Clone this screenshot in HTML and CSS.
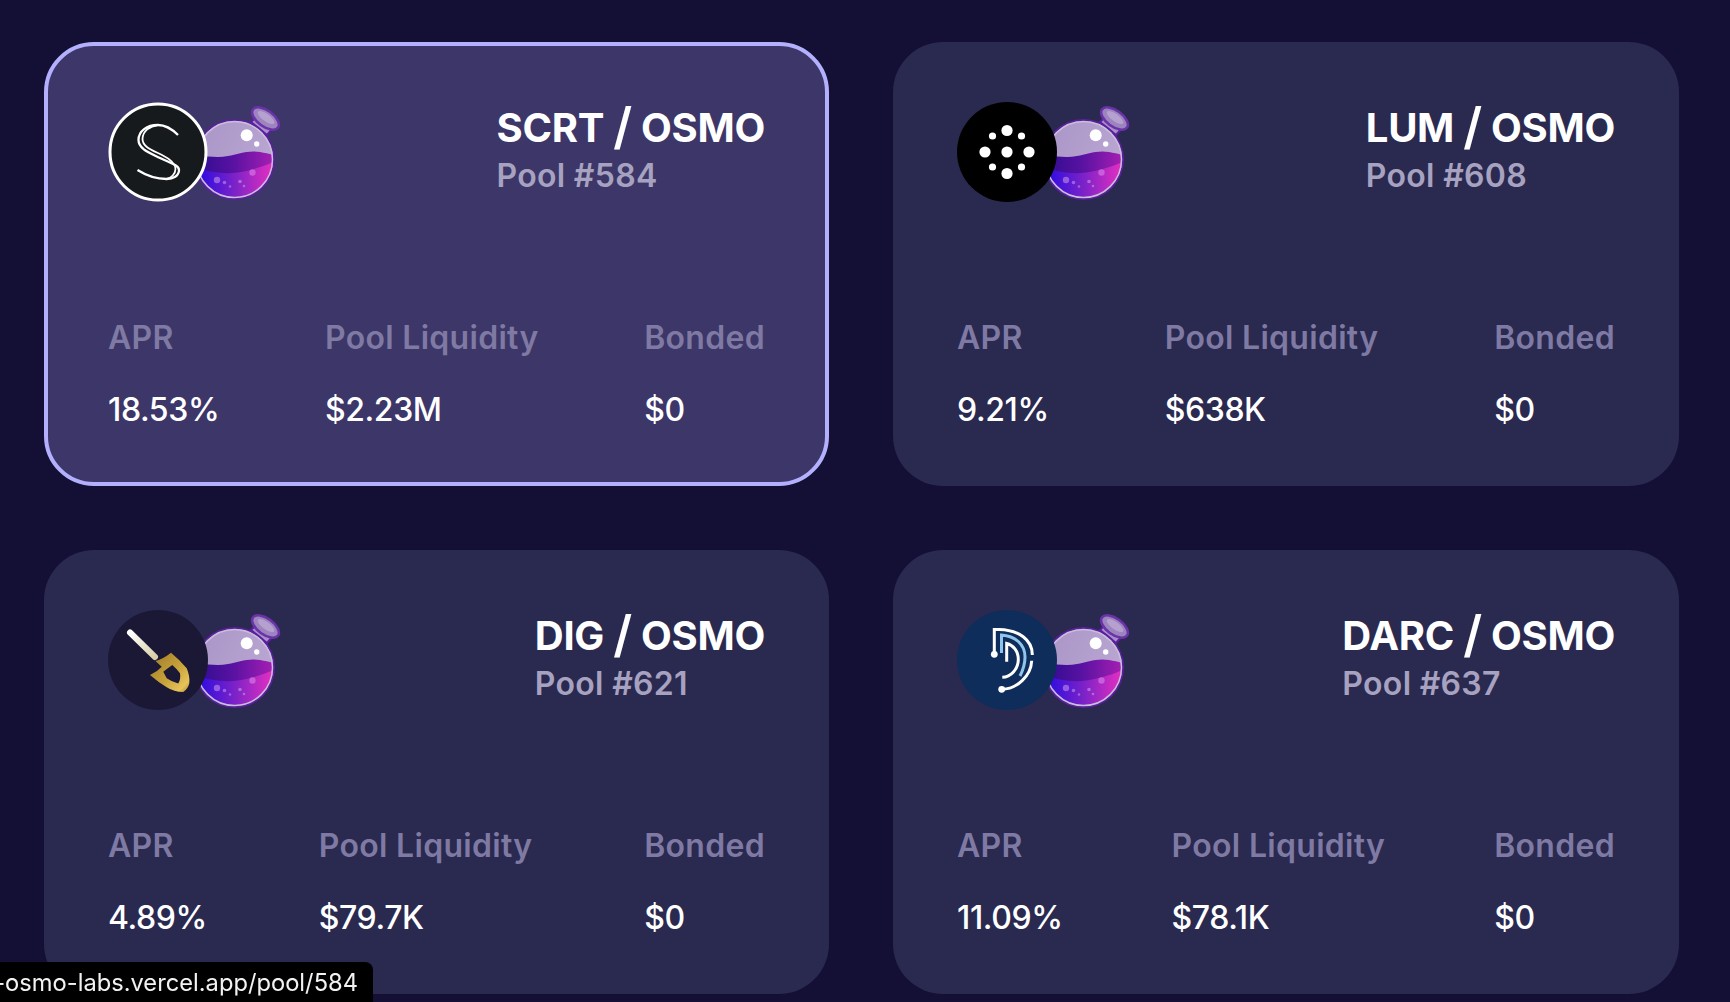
FILE: index.html
```html
<!DOCTYPE html>
<html lang="en">
<head>
<meta charset="utf-8">
<title>Pools</title>
<link rel="stylesheet" href="styles.css">
</head>
<body>
<svg class="defs" width="0" height="0" aria-hidden="true">
  <defs>
    <linearGradient id="glass" x1="0" y1="0" x2="1" y2="0.4"><stop offset="0" stop-color="#a994c6"/><stop offset="1" stop-color="#b9a6d2"/></linearGradient>
    <linearGradient id="band" x1="0" y1="0" x2="1" y2="0"><stop offset="0" stop-color="#2a0b8f"/><stop offset="0.5" stop-color="#5a12a2"/><stop offset="1" stop-color="#ab20b4"/></linearGradient>
    <linearGradient id="liquid" x1="0" y1="0" x2="1" y2="0"><stop offset="0" stop-color="#1f08e6"/><stop offset="0.5" stop-color="#7a22c8"/><stop offset="1" stop-color="#ee30c0"/></linearGradient>
    <linearGradient id="gold" x1="0" y1="0" x2="1" y2="1"><stop offset="0" stop-color="#9a7a2a"/><stop offset="0.55" stop-color="#c8a23a"/><stop offset="0.85" stop-color="#e6c45a"/><stop offset="1" stop-color="#a88428"/></linearGradient>
    <linearGradient id="handle" x1="0" y1="0" x2="1" y2="1"><stop offset="0" stop-color="#ffffff"/><stop offset="1" stop-color="#d8cfa8"/></linearGradient>
    <clipPath id="bulb"><circle cx="38.5" cy="53.5" r="38.5"/></clipPath>
    <filter id="glow" x="-50%" y="-50%" width="200%" height="200%"><feGaussianBlur stdDeviation="0.7"/></filter>
    <symbol id="flask" viewBox="-4 0 92 96">
      <path d="M55 16 L63 8 L78 21 L71 29 Z" fill="#a78fc9" stroke="#5b1fa0" stroke-width="2"/>
      <ellipse cx="69.5" cy="12.5" rx="15.5" ry="8" transform="rotate(36 69.5 12.5)" fill="#9c84bf" stroke="#6a33a8" stroke-width="2.6"/>
      <ellipse cx="70" cy="11.5" rx="10" ry="3.6" transform="rotate(36 70 11.5)" fill="#b5a0d0"/>
      <circle cx="38.5" cy="53.5" r="40.5" fill="#5b1fa0"/>
      <g clip-path="url(#bulb)">
        <rect x="-4" y="10" width="84" height="86" fill="url(#glass)"/>
        <path d="M-4 50 C12 50 22 52 32 50 C42 48 52 44 64 46 C70 47 74 48 80 50 L80 96 L-4 96 Z" fill="url(#band)"/>
        <path d="M-4 61 C10 65 24 68 36 67 C50 66 64 62 80 55 L80 96 L-4 96 Z" fill="url(#liquid)"/>
        <circle cx="21" cy="74" r="3.2" fill="#a878e6" opacity=".75"/>
        <circle cx="28.5" cy="76.5" r="1.8" fill="#a878e6" opacity=".75"/>
        <circle cx="34" cy="80.5" r="1.3" fill="#a878e6" opacity=".75"/>
        <circle cx="44" cy="75.5" r="1.8" fill="#b880e6" opacity=".75"/>
        <circle cx="48" cy="80" r="1.3" fill="#b880e6" opacity=".75"/>
        <circle cx="56.5" cy="66.5" r="3.2" fill="#d070e0" opacity=".75"/>
      </g>
      <circle cx="38.5" cy="53.5" r="38" fill="none" stroke="#c8bfd8" stroke-width="1.5"/>
      <circle cx="50.7" cy="29.3" r="6" fill="#fff"/>
      <circle cx="60.7" cy="38" r="2.7" fill="#fff"/>
    </symbol>
  </defs>
</svg>

<main class="grid">
  <a class="card card-active">
    <div class="head">
      <div class="icons">
        <svg class="token" viewBox="0 0 100 100">
          <circle cx="50" cy="50" r="48" fill="#171a1d" stroke="#fff" stroke-width="3"/>
          <path d="M70 33 C64 27 57 23 50 23 C39 23 30.5 29 30.5 38 C30.5 47 42 51 52 56 C62 61 71 63 71 68 C71 74 65 77 58.7 77 C49 77 39 74 29.5 68" fill="none" stroke="#fff" stroke-width="2.3"/>
          <path d="M50 23 C42 24 34.5 29 34.5 37 C34.5 45 44 48 54 53 C62 57 67.5 61 67.5 67 C67.5 72 63 76 58.7 77" fill="none" stroke="#fff" stroke-width="1.8"/>
        </svg>
        <svg class="flask"><use href="#flask"/></svg>
      </div>
      <div class="title">
        <h2>SCRT <span class="slash">/</span> OSMO</h2>
        <p>Pool #584</p>
      </div>
    </div>
    <div class="stats">
      <div class="stat"><span class="label">APR</span><span class="value">18.53%</span></div>
      <div class="stat"><span class="label">Pool Liquidity</span><span class="value">$2.23M</span></div>
      <div class="stat"><span class="label">Bonded</span><span class="value">$0</span></div>
    </div>
  </a>

  <a class="card">
    <div class="head">
      <div class="icons">
        <svg class="token" viewBox="0 0 100 100">
          <circle cx="50" cy="50" r="50" fill="#000"/>
          <g fill="#fff" filter="url(#glow)">
            <circle cx="50" cy="50" r="5.6"/><circle cx="50" cy="28.5" r="5.6"/><circle cx="50" cy="71.5" r="5.6"/>
            <circle cx="28" cy="50" r="5.6"/><circle cx="72" cy="50" r="5.6"/>
            <circle cx="35.5" cy="34" r="3.6"/><circle cx="64.5" cy="34" r="3.6"/><circle cx="35.5" cy="65" r="3.6"/><circle cx="64.5" cy="65" r="3.6"/>
          </g>
        </svg>
        <svg class="flask"><use href="#flask"/></svg>
      </div>
      <div class="title">
        <h2>LUM <span class="slash">/</span> OSMO</h2>
        <p>Pool #608</p>
      </div>
    </div>
    <div class="stats">
      <div class="stat"><span class="label">APR</span><span class="value">9.21%</span></div>
      <div class="stat"><span class="label">Pool Liquidity</span><span class="value">$638K</span></div>
      <div class="stat"><span class="label">Bonded</span><span class="value">$0</span></div>
    </div>
  </a>

  <a class="card">
    <div class="head">
      <div class="icons">
        <svg class="token" viewBox="0 0 100 100">
          <circle cx="50" cy="50" r="50" fill="#1b1836"/>
          <path d="M22 22.5 L47 47" stroke="url(#handle)" stroke-width="6" stroke-linecap="round"/>
          <path fill-rule="evenodd" fill="url(#gold)" d="M47.5 51 Q55 49 63 42.7 Q72 50 78.7 58.3 Q82 66 81.3 73.3 Q80 79 75.3 82 Q66 82 58.7 77.3 Q50 72 42 65 Q49 62 53.7 56.7 Z M55.3 61.7 Q60 58 64.3 55 Q69 59 72 63.3 Q73 69 70.3 73.5 Q64 72 58.7 68.3 Z"/>
        </svg>
        <svg class="flask"><use href="#flask"/></svg>
      </div>
      <div class="title">
        <h2>DIG <span class="slash">/</span> OSMO</h2>
        <p>Pool #621</p>
      </div>
    </div>
    <div class="stats">
      <div class="stat"><span class="label">APR</span><span class="value">4.89%</span></div>
      <div class="stat"><span class="label">Pool Liquidity</span><span class="value">$79.7K</span></div>
      <div class="stat"><span class="label">Bonded</span><span class="value">$0</span></div>
    </div>
  </a>

  <a class="card">
    <div class="head">
      <div class="icons">
        <svg class="token" viewBox="0 0 100 100">
          <circle cx="50" cy="50" r="50" fill="#0f2d5a"/>
          <g fill="none" stroke-width="3">
            <path d="M37.3 44 L37.3 19.5 L42 19.5 C62 20 75.5 30 75.3 45" stroke="#fff"/>
            <path d="M74.7 50.7 C74 66 60 79 44.7 79.3" stroke="#fff"/>
            <path d="M44.5 43 L44.5 25 C58 26 68 34 68 47 C68 54 66 60 63 66" stroke="#8fc4ec"/>
            <path d="M49.7 51.7 L49.7 33.5 C56 35 61.5 41 61.3 50 C61 59 54 67 45.3 67.3" stroke="#fff"/>
          </g>
          <circle cx="37.3" cy="44.3" r="3.4" fill="#fff"/>
          <circle cx="44.7" cy="79.3" r="3.4" fill="#fff"/>
        </svg>
        <svg class="flask"><use href="#flask"/></svg>
      </div>
      <div class="title">
        <h2>DARC <span class="slash">/</span> OSMO</h2>
        <p>Pool #637</p>
      </div>
    </div>
    <div class="stats">
      <div class="stat"><span class="label">APR</span><span class="value">11.09%</span></div>
      <div class="stat"><span class="label">Pool Liquidity</span><span class="value">$78.1K</span></div>
      <div class="stat"><span class="label">Bonded</span><span class="value">$0</span></div>
    </div>
  </a>
</main>

<div class="status"><span>-osmo-labs.vercel.app/pool/584</span></div>
</body>
</html>
```

FILE: styles.css
```css
* { box-sizing: border-box; }

html, body {
  margin: 0;
  height: 100%;
  overflow: hidden;
}

body {
  background: #140f34;
  font-family: Inter, "Liberation Sans", sans-serif;
  color: #fff;
}

.defs { position: absolute; }

.grid {
  display: grid;
  grid-template-columns: 785px 786px;
  gap: 64px;
  padding: 42px 0 0 44px;
}

.card {
  display: flex;
  flex-direction: column;
  justify-content: space-between;
  height: 444px;
  padding: 56px 60px 52px;
  border: 4px solid transparent;
  border-radius: 50px;
  background: #2a2950;
}

.card-active {
  background: #3d3668;
  border-color: #b3b1fd;
}

.head {
  display: flex;
  justify-content: space-between;
  align-items: flex-start;
}

.icons {
  display: flex;
  align-items: flex-start;
}

.token {
  position: relative;
  z-index: 1;
  width: 100px;
  height: 100px;
  flex: none;
}

.flask {
  width: 92px;
  height: 96px;
  margin-left: -16px;
  margin-top: 4px;
  flex: none;
}

.title h2 {
  margin: 0;
  font-size: 40px;
  line-height: 48px;
  font-weight: 700;
  letter-spacing: -0.3px;
  white-space: nowrap;
}

.slash {
  font-size: 50px;
  line-height: 48px;
  font-weight: 600;
  vertical-align: -2px;
}

.title p {
  margin: 4px 0 0;
  font-size: 32px;
  line-height: 40px;
  font-weight: 600;
  letter-spacing: 0.3px;
  color: #a6a2c0;
}

.stats {
  display: flex;
  justify-content: space-between;
}

.stat {
  display: flex;
  flex-direction: column;
  gap: 32px;
}

.label {
  font-size: 32px;
  line-height: 40px;
  font-weight: 600;
  letter-spacing: 0.3px;
  color: #7f7aa3;
}

.value {
  font-size: 32px;
  line-height: 40px;
  font-weight: 500;
  letter-spacing: -0.4px;
}

.status {
  position: fixed;
  left: 0;
  bottom: 0;
  display: flex;
  justify-content: flex-end;
  height: 40px;
  width: 373px;
  padding: 2px 15px 0 0;
  background: #000;
  border-top-right-radius: 8px;
  font-size: 23.7px;
  line-height: 38px;
  white-space: nowrap;
  overflow: hidden;
  color: #f2f2f2;
}
```
